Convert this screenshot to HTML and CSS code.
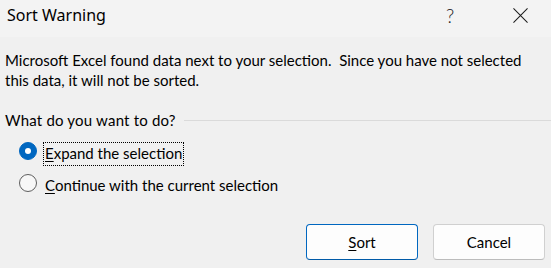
FILE: index.html
```html
<!DOCTYPE html>
<html>
<head>
<meta charset="utf-8">
<title>Sort Warning</title>
<link rel="stylesheet" href="styles.css">
</head>
<body>
<div class="dialog">
  <div class="titlebar">
    <span class="title">Sort Warning</span>
    <span class="tb-btn help">?</span>
    <span class="tb-btn close">
      <svg width="16" height="16" viewBox="0 0 16 16"><path d="M0.5 0.5 L15.5 15.5 M15.5 0.5 L0.5 15.5" stroke="#1b1b1b" stroke-width="1.1" fill="none"/></svg>
    </span>
  </div>
  <div class="content">
    <p class="msg">Microsoft Excel found data next to your selection.&nbsp; Since you have not selected this data, it will not be sorted.</p>
    <div class="group-head">
      <span class="group-title">What do you want to do?</span>
      <span class="rule"></span>
    </div>
    <div class="options">
      <div class="opt">
        <span class="radio on"></span>
        <span class="lbl focus"><u>E</u>xpand the selection</span>
      </div>
      <div class="opt">
        <span class="radio"></span>
        <span class="lbl"><u>C</u>ontinue with the current selection</span>
      </div>
    </div>
    <div class="buttons">
      <button class="btn primary"><u>S</u>ort</button>
      <button class="btn">Cancel</button>
    </div>
  </div>
</div>
</body>
</html>
```
FILE: styles.css
```css
html, body {
  margin: 0;
  padding: 0;
  background: #f0f0f0;
}
.dialog {
  width: 551px;
  height: 268px;
  display: flex;
  flex-direction: column;
  font-family: Lato, "Noto Sans", sans-serif;
  font-size: 15px;
  color: #000;
}
.titlebar {
  height: 37px;
  box-sizing: border-box;
  background: #f3f3f3;
  display: flex;
  align-items: flex-start;
  padding: 5px 8px 0 7px;
}
.title {
  flex: 1;
  font-family: "Noto Sans", sans-serif;
  font-size: 16px;
  line-height: 20px;
  color: #000;
}
.tb-btn {
  width: 46px;
  display: flex;
  justify-content: center;
}
.help {
  font-family: Lato, sans-serif;
  font-weight: 300;
  font-size: 19px;
  line-height: 22px;
  color: #1b1b1b;
  margin-right: 24px;
}
.close {
  padding-top: 3px;
}
.close svg {
  display: block;
  width: 15px;
  height: 15px;
}
.content {
  flex: 1;
  display: flex;
  flex-direction: column;
  padding: 0 6px 0 5px;
}
.msg {
  margin: 13px 0 0 0;
  width: 530px;
  line-height: 20px;
}
.group-head {
  margin-top: 20px;
  display: flex;
  align-items: center;
  line-height: 20px;
}
.group-title {
  letter-spacing: 0.2px;
}
.rule {
  flex: 1;
  height: 1px;
  background: #dadada;
  margin-left: 8px;
  margin-right: -6px;
}
.options {
  margin-top: 12px;
  display: flex;
  flex-direction: column;
  gap: 8px;
  padding-left: 14px;
}
.opt {
  display: flex;
  align-items: flex-start;
  gap: 6px;
}
.radio {
  width: 18px;
  height: 18px;
  box-sizing: border-box;
  border-radius: 50%;
  border: 1px solid #5f5f5f;
  background: #f7f7f7;
  position: relative;
  flex: none;
}
.radio.on {
  border-color: #0067c0;
  background: #0067c0;
}
.radio.on::after {
  content: "";
  position: absolute;
  left: 5px;
  top: 5px;
  width: 6px;
  height: 6px;
  border-radius: 50%;
  background: #fff;
}
.lbl {
  line-height: 21px;
  padding: 0 1px 1px 1px;
  border: 1px solid transparent;
}
.lbl.focus {
  border: 1px dotted #000;
}
u {
  text-decoration-thickness: 1px;
  text-underline-offset: 2px;
}
.buttons {
  margin-top: 26px;
  display: flex;
  justify-content: flex-end;
  gap: 15px;
}
.btn {
  width: 112px;
  height: 36px;
  box-sizing: border-box;
  border-radius: 4px;
  border: 1px solid #d0d0d0;
  border-bottom-color: #bcbcbc;
  background: #fdfdfd;
  font-family: Lato, "Noto Sans", sans-serif;
  font-size: 15px;
  color: #000;
  padding: 0;
}
.btn.primary {
  border-color: #0067c0;
  border-bottom-color: #005ba8;
}
```
